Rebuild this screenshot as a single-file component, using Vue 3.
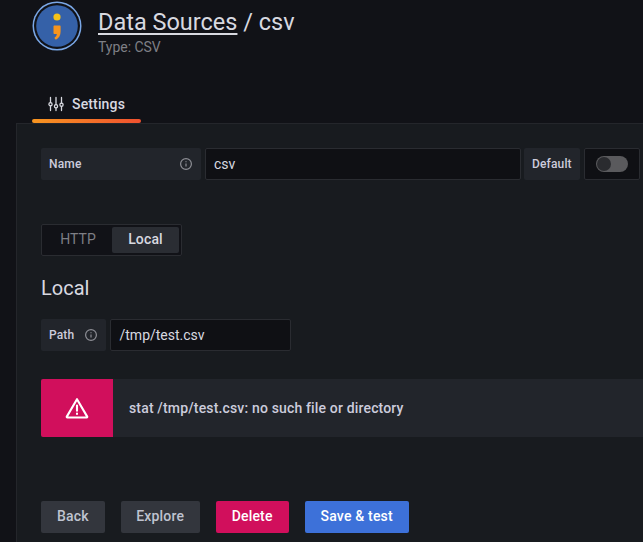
<script setup>
const buttons = [
  { label: 'Back', cls: 'secondary' },
  { label: 'Explore', cls: 'secondary tight' },
  { label: 'Delete', cls: 'danger' },
  { label: 'Save & test', cls: 'primary' }
]
</script>

<template>
  <div class="page">
    <header class="head">
      <svg class="logo" width="50" height="50" viewBox="0 0 50 50">
        <circle cx="25" cy="25" r="24.5" fill="#7aa7e6" />
        <circle cx="25" cy="25" r="23" fill="#101218" />
        <circle cx="25" cy="25" r="20.8" fill="#3561a8" />
        <circle cx="25" cy="16" r="3.6" fill="#f5c218" />
        <path d="M21.5 25.5c0-.6.4-1 1-1h5.2c.5 0 .9.4.9 1v5c0 3.8-1.6 6.5-4.7 8.2l-1.6-1.8c1.5-1 2.4-2.3 2.5-3.9h-2.3c-.6 0-1-.4-1-1z" fill="#f7941d" />
      </svg>
      <div class="titles">
        <h1 class="title"><span class="link">Data Sources</span> / csv</h1>
        <div class="sub">Type: CSV</div>
      </div>
    </header>

    <nav class="tabs">
      <div class="tab">
        <svg width="16" height="16" viewBox="0 0 16 16" fill="none" stroke="#d8d9e0" stroke-width="1.3" stroke-linecap="round">
          <path d="M2.5 1.5v5M2.5 10v4.5M8 1.5v7M8 12v2.5M13.5 1.5v5.5M13.5 10.500v4" />
          <circle cx="2.500" cy="8.200" r="1.600" />
          <circle cx="8" cy="10.200" r="1.600" />
          <circle cx="13.500" cy="8.800" r="1.600" />
        </svg>
        <span>Settings</span>
      </div>
    </nav>

    <main class="panel">
      <div class="row">
        <div class="label name-label">
          <span>Name</span>
          <svg class="info" width="14" height="14" viewBox="0 0 14 14" fill="none" stroke="#8e8f96" stroke-width="1.2">
            <circle cx="7" cy="7" r="5.4" />
            <path d="M7 6.4v3.2M7 4.2v1" />
          </svg>
        </div>
        <div class="input name-input">csv</div>
        <div class="label default-label">Default</div>
        <div class="toggle-box"><span class="toggle"><span class="knob"></span></span></div>
      </div>

      <div class="radio">
        <span class="opt">HTTP</span>
        <span class="opt active">Local</span>
      </div>

      <h3 class="section">Local</h3>

      <div class="row">
        <div class="label path-label">
          <span>Path</span>
          <svg class="info" width="14" height="14" viewBox="0 0 14 14" fill="none" stroke="#8e8f96" stroke-width="1.2">
            <circle cx="7" cy="7" r="5.4" />
            <path d="M7 6.4v3.2M7 4.2v1" />
          </svg>
        </div>
        <div class="input path-input">/tmp/test.csv</div>
      </div>

      <div class="alert">
        <div class="alert-icon">
          <svg width="24" height="24" viewBox="0 0 24 24" fill="none" stroke="#fff" stroke-width="2.1" stroke-linejoin="round" stroke-linecap="round">
            <path d="M12 3.2 22.2 20.6a.6.6 0 0 1-.5.9H2.3a.6.6 0 0 1-.5-.9z" />
            <path d="M12 9.500v5.200M12 17.600v.300" />
          </svg>
        </div>
        <div class="alert-text">stat /tmp/test.csv: no such file or directory</div>
      </div>

      <div class="actions">
        <button v-for="b in buttons" :key="b.label" class="btn" :class="b.cls">{{ b.label }}</button>
      </div>
    </main>
  </div>
</template>

<style>
html, body { margin: 0; background: #111217; overflow: hidden; }
</style>

<style scoped>
.page {
  width: 643px;
  height: 542px;
  overflow: hidden;
  background: #111217;
  color: #d8d9e0;
  font-family: Roboto, "Liberation Sans", sans-serif;
  font-size: 14px;
}
.head {
  display: flex;
  height: 58px;
  padding-left: 32px;
  gap: 16px;
  align-items: flex-start;
}
.logo { display: block; margin-top: 1px; flex: none; }
.titles { padding-top: 7px; }
.title {
  margin: 0;
  font-size: 23.5px;
  line-height: 30px;
  font-weight: 400;
  color: #d8d9e0;
}
.link { text-decoration: underline; text-underline-offset: 3px; text-decoration-thickness: 2px; }
.sub { font-size: 14px; line-height: 17px; color: #7e7f85; margin-top: 2px; letter-spacing: -0.03px; }
.tabs {
  height: 65px;
  padding-left: 32px;
  display: flex;
  align-items: flex-end;
}
.tab {
  width: 109px;
  height: 39px;
  box-sizing: border-box;
  padding: 1px 0 0 16px;
  display: flex;
  align-items: center;
  gap: 8px;
  font-weight: 500;
  font-size: 14px;
  letter-spacing: 0.15px;
  color: #d8d9e0;
  position: relative;
}
.tab::after {
  content: "";
  position: absolute;
  left: 0;
  right: 0;
  bottom: 0;
  height: 4px;
  border-radius: 2px;
  background: linear-gradient(90deg, #f79520, #f0512f);
}
.panel {
  margin-left: 16px;
  padding: 24px 0 0 24px;
  height: 419px;
  box-sizing: border-box;
  background: #181b1f;
  border-top: 1px solid #24262b;
  border-left: 1px solid #24262b;
  width: 640px;
}
.row { display: flex; gap: 4px; height: 32px; }
.label {
  display: flex;
  align-items: center;
  justify-content: space-between;
  box-sizing: border-box;
  height: 32px;
  padding: 0 8px;
  background: #22252b;
  border-radius: 2px;
  font-size: 12px;
  font-weight: 500;
  letter-spacing: 0.15px;
  color: #ccccdc;
}
.info { display: block; }
.name-label { width: 160px; }
.default-label { width: 56px; margin-left: -1px; }
.path-label { width: 65px; }
.input {
  box-sizing: border-box;
  height: 32px;
  line-height: 30px;
  padding: 0 8px;
  background: #0f1014;
  border: 1px solid #2a2c31;
  border-radius: 2px;
  font-size: 14px;
  color: #d8d9e0;
}
.name-input { width: 316px; }
.path-input { width: 181px; padding-left: 8.5px; }
.toggle-box {
  box-sizing: border-box;
  width: 56px;
  height: 32px;
  background: #0f1014;
  border: 1px solid #2a2c31;
  border-radius: 2px;
  display: flex;
  align-items: center;
  justify-content: center;
}
.toggle {
  width: 32px;
  height: 16px;
  border-radius: 8px;
  background: #5a5a5d;
  position: relative;
  display: block;
}
.knob {
  position: absolute;
  left: 1px;
  top: 1px;
  width: 14px;
  height: 14px;
  border-radius: 50%;
  background: #2a2b2f;
}
.radio {
  margin-top: 44px;
  width: 141px;
  height: 32px;
  box-sizing: border-box;
  border: 1px solid #2a2c31;
  border-radius: 2px;
  padding: 2px;
  display: flex;
  background: #111217;
}
.opt {
  height: 26px;
  line-height: 24px;
  text-align: center;
  font-size: 14px;
  color: #7e7f85;
  width: 68px;
}
.opt.active {
  width: 67px;
  background: #2a2d33;
  border-radius: 2px;
  color: #d8d9e0;
  font-weight: 500;
  letter-spacing: 0.15px;
}
.section {
  margin: 19px 0 18px;
  font-size: 20px;
  line-height: 26px;
  font-weight: 400;
  color: #d8d9e0;
}
.alert {
  margin-top: 28px;
  display: flex;
  height: 58px;
  width: 640px;
  background: #22252b;
  border-radius: 2px;
  overflow: hidden;
}
.alert-icon {
  width: 72px;
  flex: none;
  background: #d10f5c;
  display: flex;
  align-items: center;
  justify-content: center;
}
.alert-text {
  padding-left: 16px;
  align-self: center;
  font-size: 14px;
  font-weight: 500;
  letter-spacing: 0.16px;
  color: #ccccdc;
}
.actions { margin-top: 64px; display: flex; gap: 16px; }
.btn {
  box-sizing: border-box;
  height: 32px;
  padding: 0 16px 2px;
  border: none;
  border-radius: 2px;
  font-family: inherit;
  font-size: 14px;
  font-weight: 500;
  letter-spacing: 0.18px;
}
.tight { padding: 0 15.5px 2px; }
.secondary { background: #33363d; color: #bfc3d0; }
.danger { background: #d10f5c; color: #fff; }
.primary { background: #3d71d9; color: #fff; }
</style>
